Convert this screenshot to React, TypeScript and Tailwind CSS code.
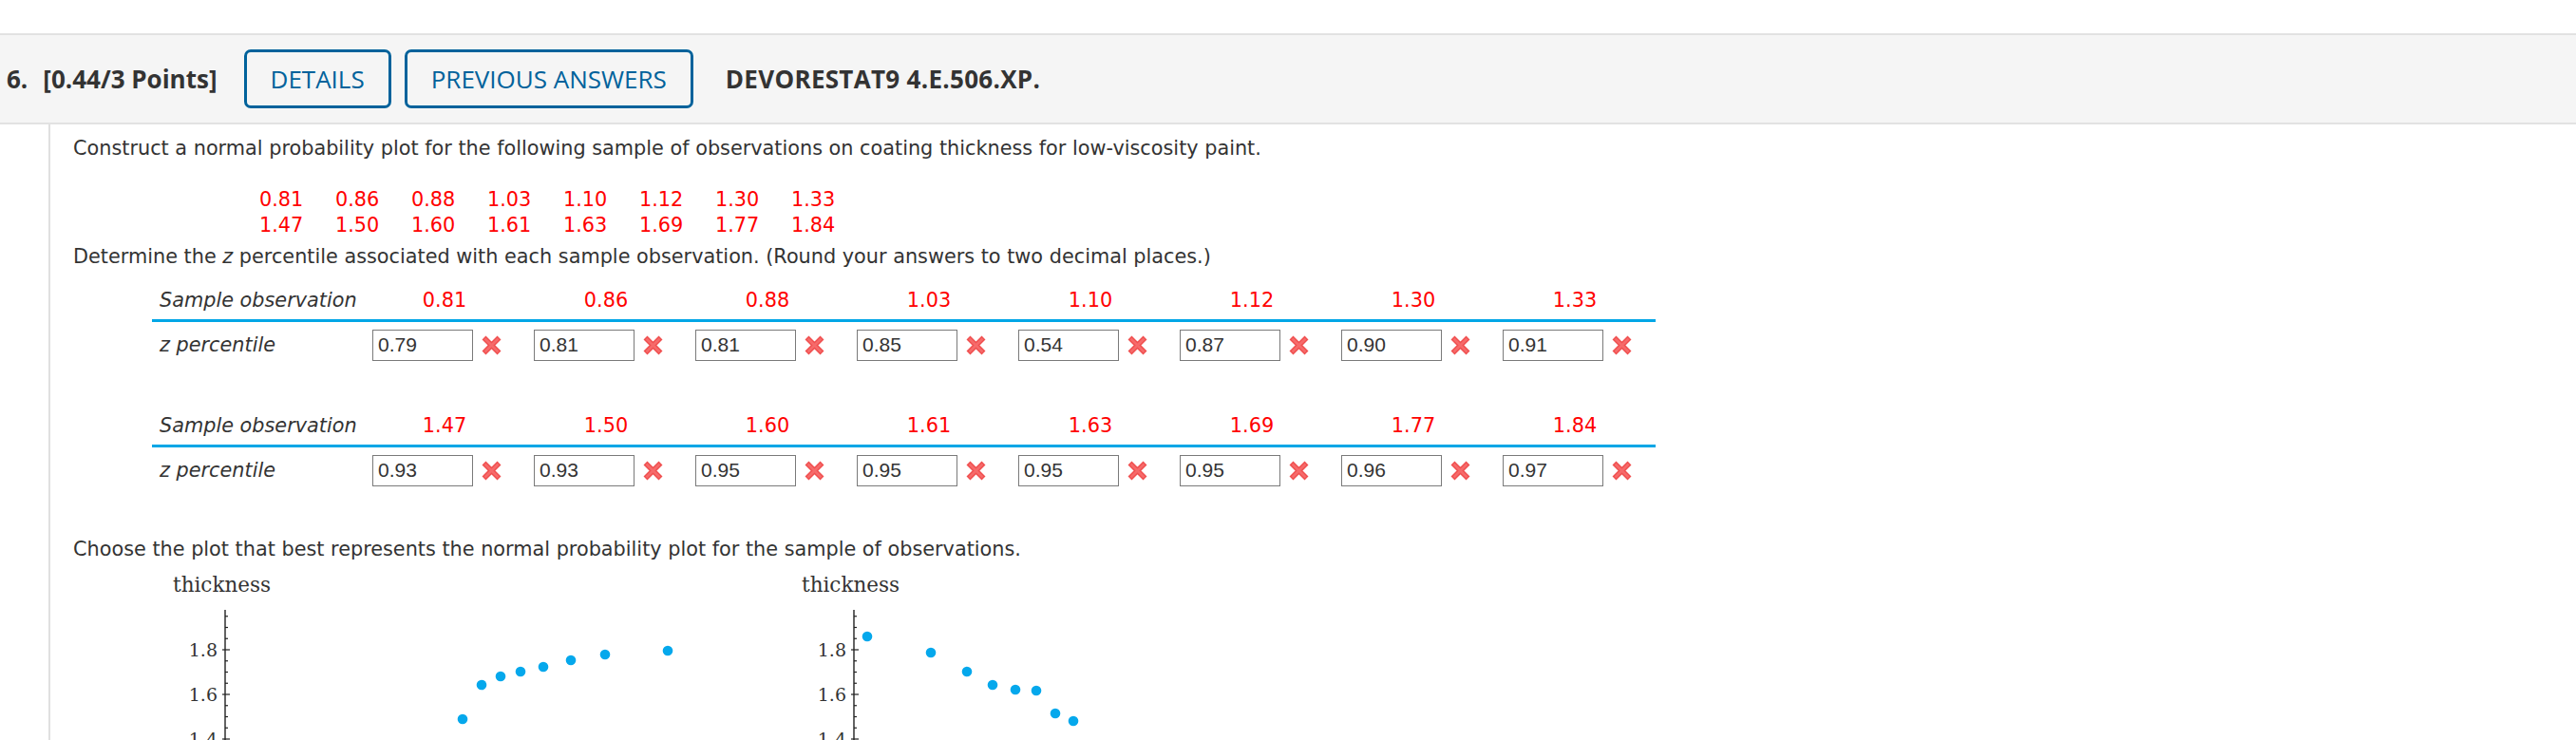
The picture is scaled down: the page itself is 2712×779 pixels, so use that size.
import React from "react";

const row1 = ["0.81", "0.86", "0.88", "1.03", "1.10", "1.12", "1.30", "1.33"];
const row2 = ["1.47", "1.50", "1.60", "1.61", "1.63", "1.69", "1.77", "1.84"];
const ans1 = ["0.79", "0.81", "0.81", "0.85", "0.54", "0.87", "0.90", "0.91"];
const ans2 = ["0.93", "0.93", "0.95", "0.95", "0.95", "0.95", "0.96", "0.97"];

function XMark() {
  return (
    <svg width="21" height="21" viewBox="0 0 21 21" className="ml-[9px] shrink-0">
      <path d="M2.5 2.5 L18.5 18.5 M18.5 2.5 L2.5 18.5" stroke="#f04f4f" strokeWidth="5.6" strokeLinecap="butt" />
      <path d="M3.5 3.5 L17.5 17.5 M17.5 3.5 L3.5 17.5" stroke="#f66a6a" strokeWidth="2.6" strokeLinecap="butt" />
    </svg>
  );
}

function ObsTable({ obs, ans, className }: { obs: string[]; ans: string[]; className?: string }) {
  return (
    <div className={"ml-[83px] w-[1583px] " + (className ?? "")}>
      <div className="flex h-[42px] items-center border-b-[3px] border-[#00a6e6]">
        <div className="w-[223px] pl-[8px] italic">Sample observation</div>
        {obs.map((v) => (
          <div key={v} className="w-[170px] text-center text-[#ff0000]">
            {v}
          </div>
        ))}
      </div>
      <div className="flex h-[50px] items-center pb-[2px]">
        <div className="w-[223px] pl-[8px] italic">z percentile</div>
        {ans.map((v, i) => (
          <div key={i} className="flex w-[170px] items-center pl-[9px]">
            <input
              readOnly
              value={v}
              className="h-[33px] w-[106px] border border-[#7a7a7a] bg-white pl-[5px] font-['Liberation_Sans',Arial,sans-serif] text-[21px] text-[#333] outline-none"
            />
            <XMark />
          </div>
        ))}
      </div>
    </div>
  );
}

function Plot({ dots }: { dots: [number, number][] }) {
  const ticks: { y: number; major: boolean }[] = [];
  for (let i = -3; i < 18; i++) {
    const y = 90 + i * 11.75;
    if (y >= 50) ticks.push({ y, major: ((i % 4) + 4) % 4 === 0 });
  }
  const labels = [
    { y: 90, t: "1.8" },
    { y: 137, t: "1.6" },
    { y: 184, t: "1.4" },
    { y: 231, t: "1.2" },
  ];
  return (
    <svg width="620" height="260" viewBox="0 0 620 260" className="shrink-0">
      <text x="22" y="29" fontFamily="'DejaVu Serif', serif" fontSize="21.5" fill="#333">
        thickness
      </text>
      <line x1="77" y1="48" x2="77" y2="260" stroke="#222" strokeWidth="1.4" />
      {ticks.map((t, i) => (
        <line
          key={i}
          x1={t.major ? 74 : 77}
          x2={t.major ? 82 : 80}
          y1={t.y}
          y2={t.y}
          stroke="#222"
          strokeWidth="1.2"
        />
      ))}
      {labels.map((l) => (
        <text
          key={l.t}
          x="69"
          y={l.y + 7}
          textAnchor="end"
          fontFamily="'DejaVu Serif', serif"
          fontSize="19"
          fill="#333"
        >
          {l.t}
        </text>
      ))}
      {dots.map(([x, y], i) => (
        <circle key={i} cx={x} cy={y} r="5.3" fill="#05a8ec" />
      ))}
    </svg>
  );
}

const leftDots: [number, number][] = [
  [327, 163],
  [347, 127],
  [367, 118],
  [388, 113],
  [412, 108],
  [441, 101],
  [477, 95],
  [543, 91],
];
const rightDots: [number, number][] = [
  [91, 76],
  [158, 93],
  [196, 113],
  [223, 127],
  [247, 132],
  [269, 133],
  [289, 157],
  [308, 165],
];

export default function App() {
  return (
    <div className="min-h-[779px] w-[2712px] bg-white font-['DejaVu_Sans',Verdana,sans-serif] text-[20.8px] leading-[27px] text-[#333]">
      <div className="h-[35px]" />
      <div className="flex h-[96px] items-center border-y-2 border-[#e2e2e2] bg-[#f5f5f5] pl-[7px] font-['Open_Sans',sans-serif] text-[26px] text-[#333]">
        <span className="font-bold">6.</span>
        <span className="ml-[16px] font-bold">[0.44/3 Points]</span>
        <button className="ml-[28px] h-[62px] rounded-[7px] border-[3px] border-[#00629b] px-[25px] text-[#00629b]">
          DETAILS
        </button>
        <button className="ml-[14px] h-[62px] rounded-[7px] border-[3px] border-[#00629b] px-[25px] text-[#00629b]">
          PREVIOUS ANSWERS
        </button>
        <span className="ml-[34px] font-bold tracking-[0.3px]">DEVORESTAT9 4.E.506.XP.</span>
      </div>
      <div className="ml-[51px] border-l-2 border-[#e0e0e0] pl-[24px] pt-[12px]">
        <p>Construct a normal probability plot for the following sample of observations on coating thickness for low-viscosity paint.</p>
        <div className="mt-[27px] pl-[196px] text-[#ff0000]">
          <div className="grid grid-cols-[repeat(8,80px)]">
            {row1.map((v) => (
              <span key={v}>{v}</span>
            ))}
          </div>
          <div className="grid grid-cols-[repeat(8,80px)]">
            {row2.map((v) => (
              <span key={v}>{v}</span>
            ))}
          </div>
        </div>
        <p className="mt-[6px]">
          Determine the <i>z</i> percentile associated with each sample observation. (Round your answers to two decimal places.)
        </p>
        <ObsTable obs={row1} ans={ans1} className="mt-[13px]" />
        <ObsTable obs={row2} ans={ans2} className="mt-[40px]" />
        <p className="mt-[44px]">Choose the plot that best represents the normal probability plot for the sample of observations.</p>
        <div className="ml-[83px] mt-[2px] flex gap-[42px]">
          <Plot dots={leftDots} />
          <Plot dots={rightDots} />
        </div>
      </div>
    </div>
  );
}
